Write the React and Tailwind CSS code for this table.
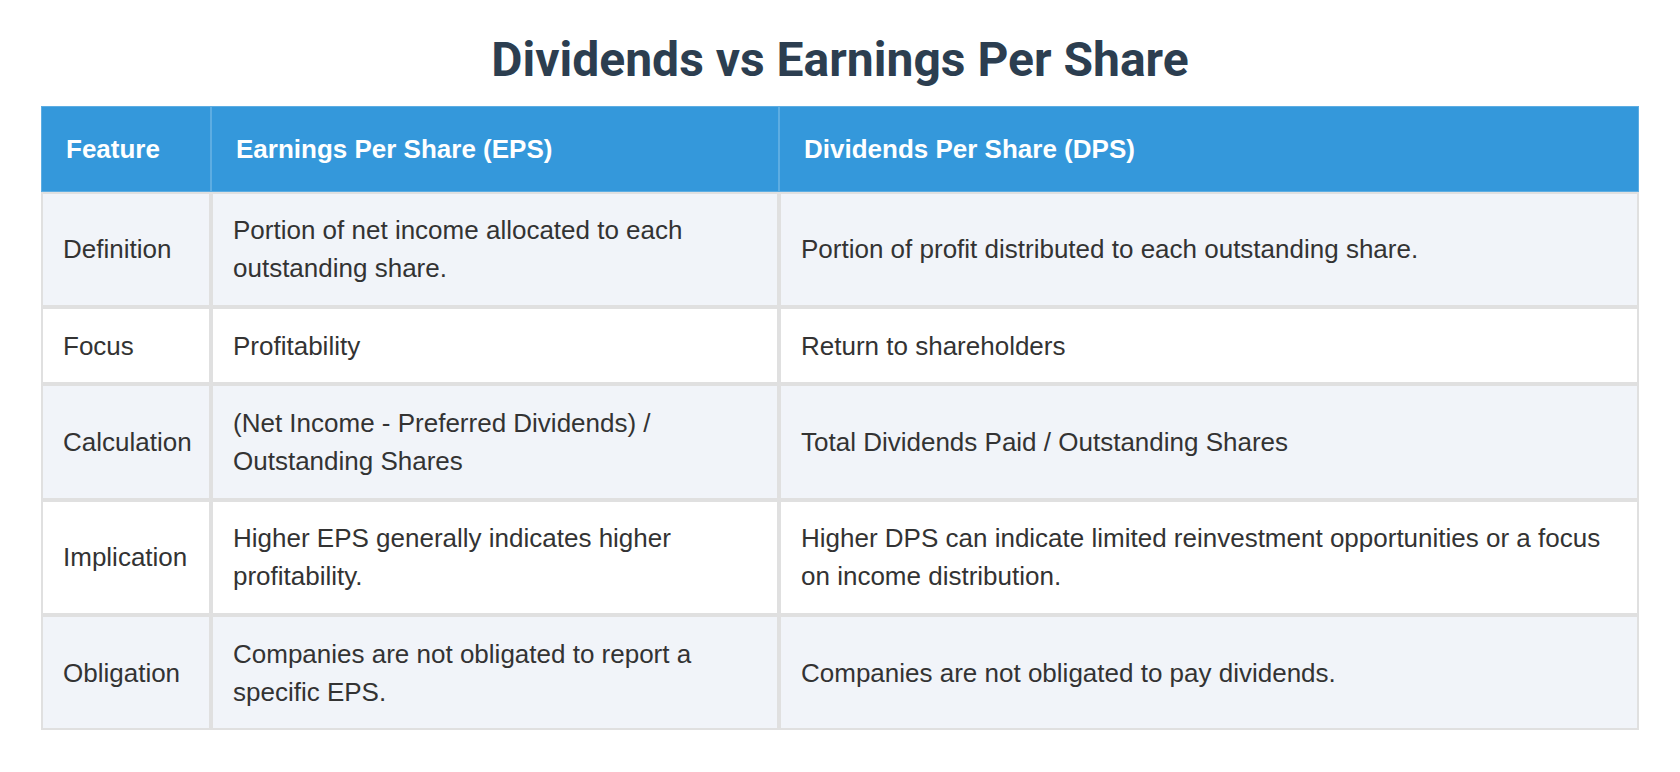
const rows = [
  {
    feature: "Definition",
    eps: "Portion of net income allocated to each outstanding share.",
    dps: "Portion of profit distributed to each outstanding share.",
  },
  {
    feature: "Focus",
    eps: "Profitability",
    dps: "Return to shareholders",
  },
  {
    feature: "Calculation",
    eps: "(Net Income - Preferred Dividends) / Outstanding Shares",
    dps: "Total Dividends Paid / Outstanding Shares",
  },
  {
    feature: "Implication",
    eps: "Higher EPS generally indicates higher profitability.",
    dps: "Higher DPS can indicate limited reinvestment opportunities or a focus on income distribution.",
  },
  {
    feature: "Obligation",
    eps: "Companies are not obligated to report a specific EPS.",
    dps: "Companies are not obligated to pay dividends.",
  },
];

function App() {
  return (
    <div className="min-h-screen bg-white px-[41px] pt-[31px] font-['Liberation_Sans',Arial,sans-serif] text-[#333]">
      <h1 className="mb-[17px] text-center font-['Roboto',sans-serif] text-[48px] font-bold leading-[1.2] text-[#2c3e50]">
        Dividends vs Earnings Per Share
      </h1>

      <table className="w-full table-fixed border-separate border-spacing-0 text-[26px] leading-[38px]">
        <colgroup>
          <col className="w-[170px]" />
          <col className="w-[568px]" />
          <col />
        </colgroup>
        <thead>
          <tr className="bg-[#3498db] text-left text-white">
            <th className="border border-[#5dade2] px-6 py-[23px] font-bold">Feature</th>
            <th className="border border-[#5dade2] px-6 py-[23px] font-bold">Earnings Per Share (EPS)</th>
            <th className="border border-[#5dade2] px-6 py-[23px] font-bold">Dividends Per Share (DPS)</th>
          </tr>
        </thead>
        <tbody>
          {rows.map((row, i) => (
            <tr key={row.feature} className={i % 2 === 0 ? "bg-[#f1f4f9]" : "bg-white"}>
              <td className="border-2 border-[#e0e0e0] px-5 py-[17.7px] align-middle">{row.feature}</td>
              <td className="border-2 border-[#e0e0e0] px-5 py-[17.7px] align-middle">{row.eps}</td>
              <td className="border-2 border-[#e0e0e0] px-5 py-[17.7px] align-middle">{row.dps}</td>
            </tr>
          ))}
        </tbody>
      </table>
    </div>
  );
}

export default App;
